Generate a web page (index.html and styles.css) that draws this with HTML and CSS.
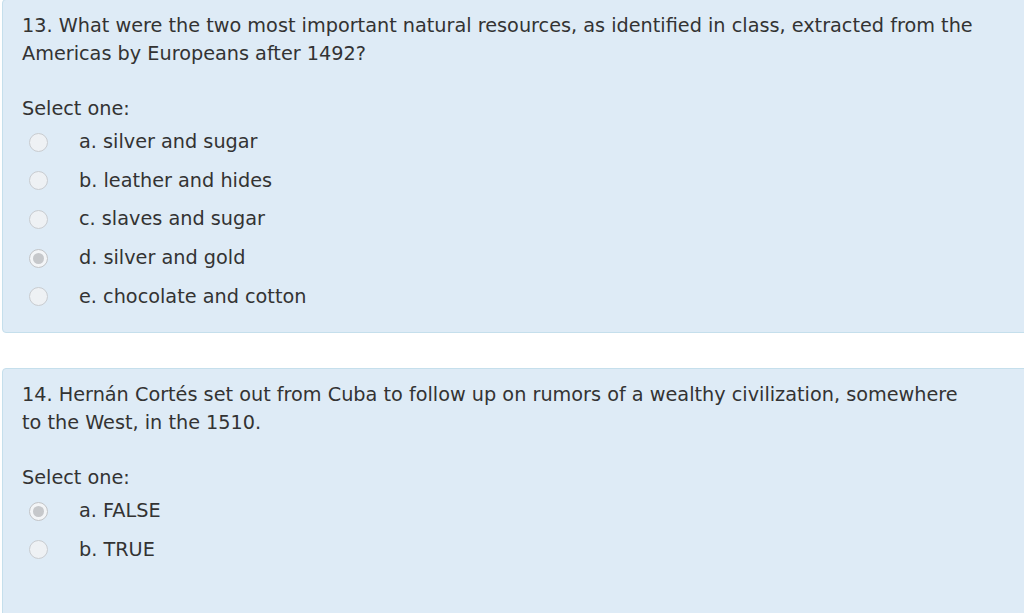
FILE: index.html
```html
<!DOCTYPE html>
<html>
<head>
<meta charset="utf-8">
<link rel="stylesheet" href="styles.css">
</head>
<body>
<div class="page">
  <div class="que first">
    <div class="qtext">13. What were the two most important natural resources, as identified in class, extracted from the Americas by Europeans after 1492?</div>
    <div class="prompt">Select one:</div>
    <div class="answers">
      <div class="opt"><span class="radio"></span><span class="label">a. silver and sugar</span></div>
      <div class="opt"><span class="radio"></span><span class="label">b. leather and hides</span></div>
      <div class="opt"><span class="radio"></span><span class="label">c. slaves and sugar</span></div>
      <div class="opt"><span class="radio checked"></span><span class="label">d. silver and gold</span></div>
      <div class="opt"><span class="radio"></span><span class="label">e. chocolate and cotton</span></div>
    </div>
  </div>
  <div class="que second">
    <div class="qtext">14. Hernán Cortés set out from Cuba to follow up on rumors of a wealthy civilization, somewhere to the West, in the 1510.</div>
    <div class="prompt">Select one:</div>
    <div class="answers">
      <div class="opt"><span class="radio checked"></span><span class="label">a. FALSE</span></div>
      <div class="opt"><span class="radio"></span><span class="label">b. TRUE</span></div>
    </div>
  </div>
</div>
</body>
</html>
```

FILE: styles.css
```css
html, body {
  margin: 0;
  padding: 0;
  background: #ffffff;
  overflow: hidden;
}
body {
  width: 1024px;
  height: 613px;
  font-family: "DejaVu Sans", Verdana, sans-serif;
  font-size: 19.25px;
  color: #333333;
}
.page {
  padding-left: 2px;
  width: 1060px;
}
.que {
  background: #deebf6;
  border: 1px solid #c5dfec;
  border-radius: 4px;
  padding: 12px 40px 16px 19px;
}
.que.first {
  margin-top: -1px;
}
.que.second {
  margin-top: 35px;
  height: 300px;
}
.qtext {
  line-height: 28px;
  width: 955px;
}
.prompt {
  line-height: 28px;
  margin-top: 27px;
}
.answers {
  display: flex;
  flex-direction: column;
}
.opt {
  display: flex;
  align-items: center;
  height: 38.6px;
  padding-left: 7px;
}
.radio {
  width: 17px;
  height: 17px;
  border: 1px solid #c9ccd0;
  border-radius: 50%;
  background: #eef1f4;
  box-sizing: content-box;
  flex: none;
  position: relative;
}
.radio.checked {
  border-color: #c2c4c7;
  background: #f3f5f7;
}
.radio.checked::after {
  content: "";
  position: absolute;
  left: 3px;
  top: 3px;
  width: 11px;
  height: 11px;
  border-radius: 50%;
  background: #c6c8cb;
}
.label {
  margin-left: 31px;
  line-height: 28px;
}
```
